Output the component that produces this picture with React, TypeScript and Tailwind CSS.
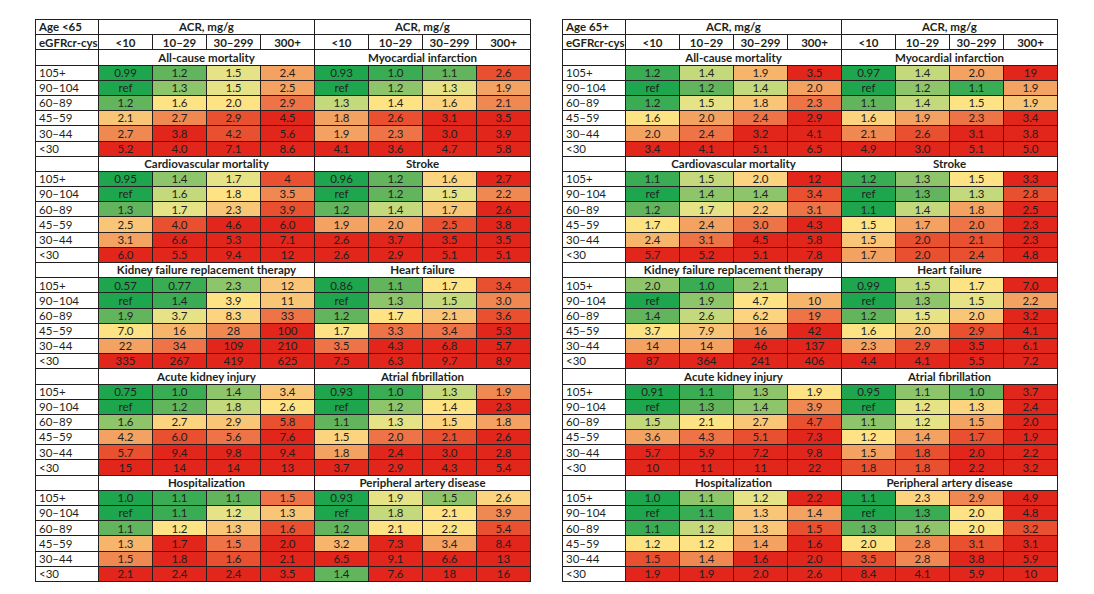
import React from "react";

// level -> background colour of a heat cell
const PALETTE = [
  "bg-[#1ea64e]", // 0 dark green
  "bg-[#3aac54]", // 1
  "bg-[#62b55d]", // 2
  "bg-[#8ec46a]", // 3
  "bg-[#c3d97b]", // 4
  "bg-[#e6e386]", // 5
  "bg-[#fde383]", // 6 yellow
  "bg-[#f9c677]", // 7
  "bg-[#f4a262]", // 8
  "bg-[#ee7447]", // 9
  "bg-[#e8502f]", // 10
  "bg-[#e2261b]", // 11 red
  "bg-[#f08852]", // 12 between 8 and 9
  "bg-[#f7b56c]", // 13 between 7 and 8
  "bg-[#fcd37f]", // 14 between 6 and 7
];

const ROW_LABELS = ["105+", "90–104", "60–89", "45–59", "30–44", "<30"];
const ACR = ["<10", "10–29", "30–299", "300+"];

type Block = { title: string; rows: string[] };
type Pair = [Block, Block];

const YOUNG: Pair[] = [
  [
    {
      title: "All-cause mortality",
      rows: [
        "0.99:0 1.2:2 1.5:5 2.4:8",
        "ref:0 1.3:3 1.5:5 2.5:8",
        "1.2:2 1.6:6 2.0:6 2.9:9",
        "2.1:7 2.7:12 2.9:10 4.5:11",
        "2.7:12 3.8:11 4.2:10 5.6:11",
        "5.2:11 4.0:11 7.1:11 8.6:11",
      ],
    },
    {
      title: "Myocardial infarction",
      rows: [
        "0.93:0 1.0:1 1.1:2 2.6:10",
        "ref:0 1.2:3 1.3:5 1.9:8",
        "1.3:4 1.4:6 1.6:14 2.1:12",
        "1.8:8 2.6:10 3.1:11 3.5:11",
        "1.9:8 2.3:9 3.0:11 3.9:11",
        "4.1:11 3.6:11 4.7:11 5.8:11",
      ],
    },
  ],
  [
    {
      title: "Cardiovascular mortality",
      rows: [
        "0.95:0 1.4:3 1.7:5 4:10",
        "ref:0 1.6:4 1.8:6 3.5:12",
        "1.3:2 1.7:5 2.3:7 3.9:10",
        "2.5:7 4.0:10 4.6:11 6.0:11",
        "3.1:8 6.6:11 5.3:11 7.1:11",
        "6.0:11 5.5:11 9.4:11 12:11",
      ],
    },
    {
      title: "Stroke",
      rows: [
        "0.96:0 1.2:2 1.6:14 2.7:11",
        "ref:0 1.2:2 1.5:5 2.2:12",
        "1.2:2 1.4:4 1.7:7 2.6:11",
        "1.9:8 2.0:8 2.5:10 3.8:11",
        "2.6:11 3.7:11 3.5:11 3.5:11",
        "2.6:11 2.9:11 5.1:11 5.1:11",
      ],
    },
  ],
  [
    {
      title: "Kidney failure replacement therapy",
      rows: [
        "0.57:0 0.77:1 2.3:3 12:7",
        "ref:0 1.4:1 3.9:6 11:7",
        "1.9:2 3.7:5 8.3:14 33:9",
        "7.0:6 16:13 28:12 100:11",
        "22:8 34:9 109:11 210:11",
        "335:11 267:11 419:11 625:11",
      ],
    },
    {
      title: "Heart failure",
      rows: [
        "0.86:0 1.1:2 1.7:6 3.4:10",
        "ref:0 1.3:3 1.5:4 3.0:12",
        "1.2:2 1.7:6 2.1:7 3.6:10",
        "1.7:6 3.3:9 3.4:9 5.3:11",
        "3.5:9 4.3:11 6.8:11 5.7:11",
        "7.5:11 6.3:11 9.7:11 8.9:11",
      ],
    },
  ],
  [
    {
      title: "Acute kidney injury",
      rows: [
        "0.75:0 1.0:1 1.4:3 3.4:7",
        "ref:0 1.2:2 1.8:4 2.6:6",
        "1.6:3 2.7:14 2.9:7 5.8:10",
        "4.2:8 6.0:10 5.6:9 7.6:11",
        "5.7:10 9.4:11 9.8:11 9.4:11",
        "15:11 14:11 14:11 13:11",
      ],
    },
    {
      title: "Atrial fibrillation",
      rows: [
        "0.93:0 1.0:1 1.3:4 1.9:12",
        "ref:0 1.2:3 1.4:6 2.3:11",
        "1.1:2 1.3:5 1.5:14 1.8:8",
        "1.5:14 2.0:9 2.1:10 2.6:11",
        "1.8:8 2.4:11 3.0:11 2.8:11",
        "3.7:11 2.9:11 4.3:11 5.4:11",
      ],
    },
  ],
  [
    {
      title: "Hospitalization",
      rows: [
        "1.0:0 1.1:1 1.1:2 1.5:9",
        "ref:0 1.1:1 1.2:5 1.3:7",
        "1.1:2 1.2:6 1.3:7 1.6:10",
        "1.3:13 1.7:11 1.5:9 2.0:11",
        "1.5:12 1.8:11 1.6:10 2.1:11",
        "2.1:11 2.4:11 2.4:11 3.5:11",
      ],
    },
    {
      title: "Peripheral artery disease",
      rows: [
        "0.93:0 1.9:5 1.5:3 2.6:14",
        "ref:0 1.8:4 2.1:6 3.9:12",
        "1.2:2 2.1:6 2.2:6 5.4:10",
        "3.2:13 7.3:11 3.4:8 8.4:11",
        "6.5:11 9.1:11 6.6:11 13:11",
        "1.4:2 7.6:11 18:11 16:11",
      ],
    },
  ],
];

const OLD: Pair[] = [
  [
    {
      title: "All-cause mortality",
      rows: [
        "1.2:1 1.4:4 1.9:13 3.5:11",
        "ref:0 1.2:2 1.4:4 2.0:8",
        "1.2:1 1.5:5 1.8:7 2.3:9",
        "1.6:6 2.0:8 2.4:9 2.9:11",
        "2.0:8 2.4:9 3.2:11 4.1:11",
        "3.4:11 4.1:11 5.1:11 6.5:11",
      ],
    },
    {
      title: "Myocardial infarction",
      rows: [
        "0.97:0 1.4:4 2.0:8 19:11",
        "ref:0 1.2:3 1.1:1 1.9:8",
        "1.1:2 1.4:4 1.5:6 1.9:7",
        "1.6:14 1.9:8 2.3:9 3.4:11",
        "2.1:12 2.6:10 3.1:11 3.8:11",
        "4.9:11 3.0:11 5.1:11 5.0:11",
      ],
    },
  ],
  [
    {
      title: "Cardiovascular mortality",
      rows: [
        "1.1:1 1.5:4 2.0:14 12:11",
        "ref:0 1.4:3 1.4:3 3.4:10",
        "1.2:2 1.7:5 2.2:7 3.1:9",
        "1.7:6 2.4:8 3.0:9 4.3:11",
        "2.4:13 3.1:9 4.5:11 5.8:11",
        "5.7:11 5.2:11 5.1:11 7.8:11",
      ],
    },
    {
      title: "Stroke",
      rows: [
        "1.2:1 1.3:3 1.5:6 3.3:11",
        "ref:0 1.3:2 1.3:4 2.8:10",
        "1.1:0 1.4:4 1.8:8 2.5:11",
        "1.5:6 1.7:8 2.0:9 2.3:11",
        "1.5:7 2.0:10 2.1:10 2.3:11",
        "1.7:8 2.0:10 2.4:10 4.8:11",
      ],
    },
  ],
  [
    {
      title: "Kidney failure replacement therapy",
      rows: [
        "2.0:3 1.0:1 2.1:3 :w",
        "ref:0 1.9:3 4.7:6 10:13",
        "1.4:2 2.6:4 6.2:14 19:9",
        "3.7:6 7.9:7 16:8 42:11",
        "14:8 14:8 46:11 137:11",
        "87:11 364:11 241:11 406:11",
      ],
    },
    {
      title: "Heart failure",
      rows: [
        "0.99:0 1.5:4 1.7:6 7.0:11",
        "ref:0 1.3:3 1.5:5 2.2:8",
        "1.2:2 1.5:5 2.0:7 3.2:11",
        "1.6:6 2.0:7 2.9:10 4.1:11",
        "2.3:8 2.9:10 3.5:11 6.1:11",
        "4.4:11 4.1:11 5.5:11 7.2:11",
      ],
    },
  ],
  [
    {
      title: "Acute kidney injury",
      rows: [
        "0.91:0 1.1:1 1.3:3 1.9:6",
        "ref:0 1.3:2 1.4:3 3.9:12",
        "1.5:4 2.1:6 2.7:7 4.7:10",
        "3.6:8 4.3:9 5.1:10 7.3:11",
        "5.7:11 5.9:11 7.2:11 9.8:11",
        "10:11 11:11 11:11 22:11",
      ],
    },
    {
      title: "Atrial fibrillation",
      rows: [
        "0.95:0 1.1:3 1.0:2 3.7:11",
        "ref:0 1.2:5 1.3:14 2.4:11",
        "1.1:3 1.2:5 1.5:8 2.0:11",
        "1.2:6 1.4:8 1.7:10 1.9:11",
        "1.5:8 1.8:10 2.0:11 2.2:11",
        "1.8:10 1.8:10 2.2:11 3.2:11",
      ],
    },
  ],
  [
    {
      title: "Hospitalization",
      rows: [
        "1.0:0 1.1:3 1.2:5 2.2:11",
        "ref:0 1.1:1 1.3:7 1.4:8",
        "1.1:1 1.2:4 1.3:7 1.5:10",
        "1.2:6 1.2:6 1.4:8 1.6:11",
        "1.5:10 1.4:12 1.6:11 2.0:11",
        "1.9:11 1.9:11 2.0:11 2.6:11",
      ],
    },
    {
      title: "Peripheral artery disease",
      rows: [
        "1.1:0 2.3:14 2.9:12 4.9:11",
        "ref:0 1.3:1 2.0:6 4.8:11",
        "1.3:2 1.6:3 2.0:6 3.2:10",
        "2.0:6 2.8:12 3.1:10 3.1:11",
        "3.5:10 2.8:12 3.8:11 5.9:11",
        "8.4:11 4.1:11 5.9:11 10:11",
      ],
    },
  ],
];

function parseRow(row: string) {
  return row.split(" ").map((c) => {
    const [value, level] = c.split(":");
    return { value, bg: level === "w" ? "bg-white" : PALETTE[Number(level)] };
  });
}

function Cell({ className = "", children }: { className?: string; children?: React.ReactNode }) {
  return (
    <div className={`flex items-center justify-center leading-none whitespace-nowrap ${className}`}>
      {children}
    </div>
  );
}

function HeatTable({ age, pairs }: { age: string; pairs: Pair[] }) {
  return (
    <div className="grid grid-cols-[62px_repeat(8,53px)] auto-rows-[14.2px] gap-px bg-[#231f20] p-px text-[11.5px] text-[#231f20]">
      <Cell className="bg-white justify-start pl-[3px] font-bold">{age}</Cell>
      <Cell className="bg-white col-span-4 font-bold">ACR, mg/g</Cell>
      <Cell className="bg-white col-span-4 font-bold">ACR, mg/g</Cell>

      <Cell className="bg-white justify-start pl-[3px] font-bold">eGFRcr-cys</Cell>
      {[...ACR, ...ACR].map((h, i) => (
        <Cell key={i} className="bg-white font-bold">
          {h}
        </Cell>
      ))}

      {pairs.map(([a, b], p) => (
        <React.Fragment key={p}>
          <Cell className="bg-white" />
          <Cell className="bg-white col-span-4 font-bold">{a.title}</Cell>
          <Cell className="bg-white col-span-4 font-bold">{b.title}</Cell>
          {ROW_LABELS.map((label, r) => (
            <React.Fragment key={r}>
              <Cell className="bg-white justify-start pl-[3px]">{label}</Cell>
              {[...parseRow(a.rows[r]), ...parseRow(b.rows[r])].map((c, i) => (
                <Cell key={i} className={c.bg}>
                  {c.value}
                </Cell>
              ))}
            </React.Fragment>
          ))}
        </React.Fragment>
      ))}
    </div>
  );
}

export default function App() {
  return (
    <div className="w-[1094px] h-[594px] bg-white flex items-start gap-[31px] pl-[35px] pt-[19px] font-['Lato','Liberation_Sans',sans-serif]">
      <HeatTable age="Age <65" pairs={YOUNG} />
      <HeatTable age="Age 65+" pairs={OLD} />
    </div>
  );
}
